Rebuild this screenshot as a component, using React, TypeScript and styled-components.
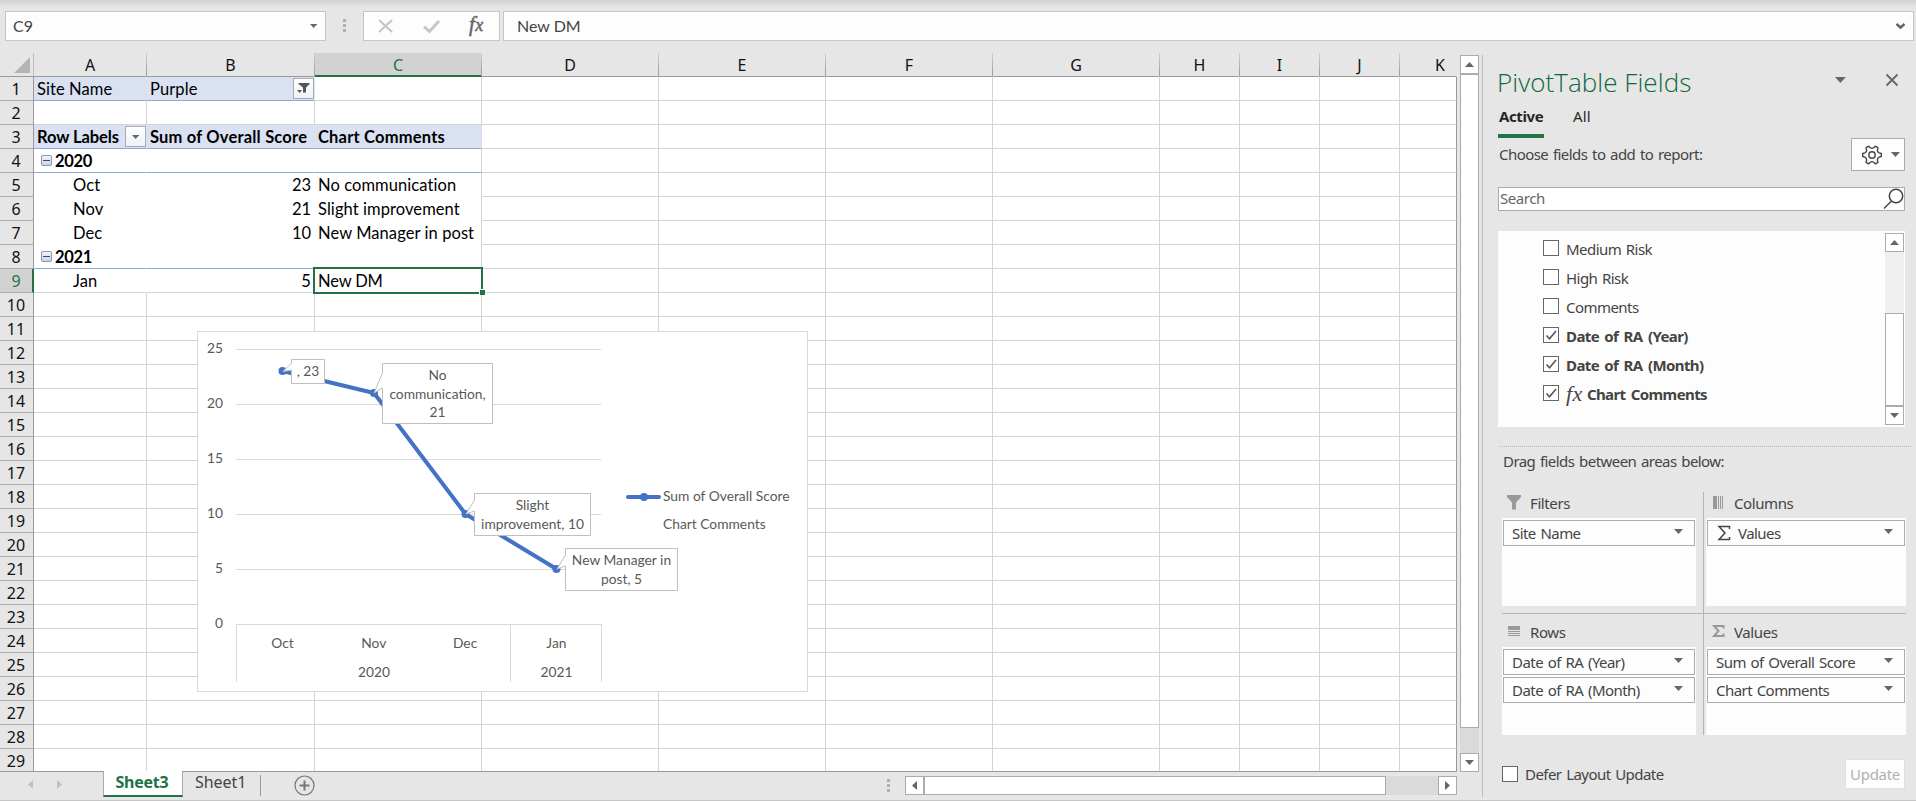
import React from "react";
import styled, { createGlobalStyle, css } from "styled-components";

const GREEN = "#217346";
const UI = `"Noto Sans", "Open Sans", sans-serif`;
const BODY = `Lato, "Open Sans", sans-serif`;

const GlobalStyle = createGlobalStyle`
  *, *::before, *::after { box-sizing: border-box; }
  body { margin: 0; background: #e6e6e6; font-family: ${UI}; overflow: hidden; }
`;

/* ---------- window frame ---------- */
const Window = styled.div`
  width: 1916px;
  height: 801px;
  background: #e6e6e6;
  display: flex;
  flex-direction: column;
  border-bottom: 1px solid #c6c6c6;
  overflow: hidden;
`;
const FormulaRow = styled.div`
  height: 53px;
  flex: none;
  display: flex;
  align-items: flex-start;
  padding: 11px 2px 0 5px;
  background: linear-gradient(#d2d2d2, #e6e6e6 8px);
`;
const FormulaBox = styled.div<{ $w?: number; $ml?: number; $pl?: number }>`
  height: 30px;
  width: ${(p) => (p.$w ? `${p.$w}px` : "auto")};
  flex: ${(p) => (p.$w ? "none" : "1")};
  margin-left: ${(p) => p.$ml ?? 0}px;
  padding: 0 8px 0 ${(p) => p.$pl ?? 7}px;
  border: 1px solid #c6c6c6;
  background: #fdfdfd;
  display: flex;
  align-items: center;
  justify-content: space-between;
  font: 16px/28px ${BODY};
  color: #444;
`;
const Tools = styled(FormulaBox)`
  justify-content: flex-start;
  padding: 0;
`;
const Dots = styled.div<{ $ml?: number; $mt?: number }>`
  display: flex;
  flex-direction: column;
  gap: 2px;
  width: 3px;
  margin: ${(p) => p.$mt ?? 0}px 0 0 ${(p) => p.$ml ?? 0}px;
  i { width: 3px; height: 3px; background: #b0b0b0; }
`;
const Main = styled.div`
  flex: 1;
  display: flex;
  min-height: 0;
`;
const Workbook = styled.div`
  width: 1482px;
  flex: none;
  display: flex;
  flex-direction: column;
`;
const SheetArea = styled.div`
  display: flex;
  height: 719px;
`;

/* ---------- grid ---------- */
const Sheet = styled.div`
  position: relative;
  width: 1457px;
  height: 719px;
  overflow: hidden;
  border-bottom: 1px solid #999;
`;
const Row = styled.div`
  display: flex;
  height: 24px;
`;
const Corner = styled.div`
  width: 34px;
  height: 24px;
  padding: 4px 3px 0 0;
  display: flex;
  justify-content: flex-end;
  border-right: 1px solid #bdbdbd;
  border-bottom: 1px solid #999;
`;
const ColHead = styled.div<{ $w: number; $on?: boolean; $last?: boolean }>`
  width: ${(p) => p.$w}px;
  height: 24px;
  flex: none;
  padding: 1px 0 0 ${(p) => (p.$last ? 24 : 0)}px;
  font: 16px/23px ${UI};
  text-align: center;
  color: ${(p) => (p.$on ? GREEN : "#111")};
  background: ${(p) => (p.$on ? "#d2d2d2" : "transparent")};
  border-bottom: ${(p) => (p.$on ? `2px solid ${GREEN}` : "1px solid #999")};
  border-right: 1px solid transparent;
  position: relative;
  ${(p) =>
    !p.$last &&
    css`
      &::after {
        content: "";
        position: absolute;
        right: -1px;
        top: 0;
        width: 1px;
        height: 100%;
        background: linear-gradient(#cfcfcf, #999);
      }
    `}
`;
const RowHead = styled.div<{ $on?: boolean }>`
  width: 34px;
  height: 24px;
  flex: none;
  font: 16px/23px ${UI};
  text-align: center;
  padding-top: 1px;
  padding-right: ${(p) => (p.$on ? 0 : 1)}px;
  color: ${(p) => (p.$on ? GREEN : "#111")};
  background: ${(p) => (p.$on ? "#d2d2d2" : "transparent")};
  border-right: ${(p) => (p.$on ? `2px solid ${GREEN}` : "1px solid #999")};
  border-bottom: 1px solid #ababab;
`;
const Cell = styled.div<{
  $w: number;
  $fill?: boolean;
  $blue?: boolean;
  $open?: boolean;
  $noRight?: boolean;
  $bold?: boolean;
  $num?: boolean;
  $indent?: number;
  $last?: boolean;
}>`
  width: ${(p) => p.$w}px;
  height: 24px;
  flex: none;
  display: flex;
  align-items: center;
  justify-content: ${(p) => (p.$num ? "flex-end" : "flex-start")};
  padding-left: ${(p) => p.$indent ?? 3}px;
  padding-right: ${(p) => (p.$num ? 3 : 0)}px;
  white-space: nowrap;
  font: ${(p) => (p.$bold ? 700 : 400)} 16.5px/23px ${BODY};
  color: #000;
  background: ${(p) => (p.$fill ? "#d9e1f2" : "#fff")};
  border-right: 1px solid
    ${(p) => (p.$last ? "#999" : p.$fill ? "#d9e1f2" : p.$noRight ? "#fff" : "#d4d4d4")};
  border-bottom: 1px solid
    ${(p) => (p.$blue ? "#8ea9db" : p.$open ? "#fff" : "#d4d4d4")};
`;
const CellText = styled.span<{ $ls: number }>`
  padding-top: 2px;
  letter-spacing: ${(p) => p.$ls}px;
`;
const DropButton = styled.span`
  width: 21px;
  height: 21px;
  flex: none;
  margin-left: auto;
  background: linear-gradient(#fff, #eef1f6);
  border: 1px solid #a6adb8;
  display: flex;
  align-items: center;
  justify-content: center;
`;
const Collapse = styled.span`
  width: 11px;
  height: 11px;
  flex: none;
  margin-right: 3px;
  border: 1px solid #8497b8;
  border-radius: 2px;
  background: linear-gradient(#f4f6f9, #ccd3df);
  display: flex;
  align-items: center;
  justify-content: center;
  &::before { content: ""; width: 7px; height: 1px; background: #344c7b; }
`;
const Selection = styled.div`
  position: absolute;
  left: 313px;
  top: 214px;
  width: 170px;
  height: 27px;
  border: 2px solid ${GREEN};
  &::after {
    content: "";
    position: absolute;
    right: -4px;
    bottom: -3px;
    width: 6px;
    height: 6px;
    background: ${GREEN};
    border: solid #fff;
    border-width: 1px 0 0 1px;
  }
`;
const ChartFrame = styled.div`
  position: absolute;
  left: 197px;
  top: 278px;
  width: 611px;
  height: 361px;
  background: #fff;
  border: 1px solid #d9d9d9;
  svg { display: block; }
`;

/* ---------- scroll bars ---------- */
const VScroll = styled.div`
  width: 19px;
  margin: 2px 0 0 3px;
  display: flex;
  flex-direction: column;
  background: #dadada;
`;
const HScroll = styled.div`
  display: flex;
  width: 552px;
  height: 19px;
  background: #dadada;
`;
const ScrollButton = styled.div`
  width: 19px;
  height: 19px;
  flex: none;
  background: #fff;
  border: 1px solid #ababab;
  display: flex;
  align-items: center;
  justify-content: center;
`;
const BottomButton = styled(ScrollButton)`
  margin-top: auto;
`;
const EndButton = styled(ScrollButton)`
  margin-left: auto;
`;
const Thumb = styled.div<{ $len: number; $h?: boolean }>`
  flex: none;
  background: #fff;
  border: 1px solid #ababab;
  ${(p) => (p.$h ? css`width: ${p.$len}px; height: 19px;` : css`height: ${p.$len}px; width: 19px;`)}
`;

/* ---------- sheet tabs ---------- */
const TabBar = styled.div`
  flex: 1;
  display: flex;
  align-items: flex-start;
  margin-top: -1px;
  position: relative;
`;
const NavArrows = styled.div`
  width: 103px;
  padding: 9px 0 0 28px;
  display: flex;
  gap: 24px;
`;
const ActiveTab = styled.div`
  width: 80px;
  height: 26px;
  padding-right: 2px;
  background: #fff;
  border: solid #ababab;
  border-width: 0 1px;
  border-bottom: 2px solid ${GREEN};
  color: ${GREEN};
  font: 700 16px/22px ${UI};
  letter-spacing: -0.25px;
  text-align: center;
`;
const Tab = styled.div`
  width: 78px;
  height: 21px;
  margin-top: 4px;
  padding-left: 12px;
  border-right: 1px solid #999;
  color: #444;
  font: 16px/14px ${UI};
  letter-spacing: -0.05px;
`;
const AddSheet = styled.div`
  margin: 4px 0 0 33px;
  width: 21px;
  height: 21px;
`;
const BottomScroll = styled.div`
  margin: 5px 25px 0 auto;
  display: flex;
  gap: 15px;
`;

/* ---------- fields pane ---------- */
const Pane = styled.aside`
  width: 434px;
  margin-top: 2px;
  margin-bottom: 3px;
  border-left: 1px solid #bdbdbd;
  padding: 0 11px 0 15px;
  color: #444;
  font: 15px/20px ${UI};
  letter-spacing: -0.55px;
  word-spacing: 1.3px;
  display: flex;
  flex-direction: column;
`;
const PaneTitle = styled.div`
  height: 46px;
  display: flex;
  align-items: center;
  justify-content: space-between;
  h1 {
    margin: 8px 0 0 -1px;
    font: 300 26px/40px "Open Sans", ${UI};
    letter-spacing: 0.05px;
    word-spacing: 0;
    color: #0f6a3a;
  }
`;
const TitleIcons = styled.div`
  display: flex;
  align-items: center;
  gap: 39px;
  margin: 4px 6px 0 0;
`;
const Tabs = styled.div`
  display: flex;
  height: 37px;
`;
const PaneTab = styled.div<{ $on?: boolean }>`
  width: ${(p) => (p.$on ? "46px" : "auto")};
  margin-right: 28px;
  padding: 5px 0 0 1px;
  color: #262626;
  font-weight: ${(p) => (p.$on ? 700 : 400)};
  letter-spacing: ${(p) => (p.$on ? -0.4 : 0.1)}px;
  border-bottom: ${(p) => (p.$on ? `4px solid ${GREEN}` : "none")};
`;
const Choose = styled.div`
  display: flex;
  justify-content: space-between;
  height: 33px;
  padding-left: 1px;
  line-height: 33px;
`;
const GearButton = styled.div`
  width: 54px;
  height: 33px;
  border: 1px solid #ababab;
  background: #fdfdfd;
  display: flex;
  align-items: center;
  padding-left: 10px;
  gap: 9px;
`;
const Search = styled.div`
  height: 24px;
  margin-top: 16px;
  padding-left: 1px;
  border: 1px solid #ababab;
  background: #fff;
  color: #666;
  display: flex;
  justify-content: space-between;
  line-height: 21px;
  letter-spacing: -0.45px;
`;
const FieldList = styled.div`
  height: 196px;
  margin-top: 20px;
  background: #fdfdfd;
  display: flex;
  justify-content: space-between;
`;
const ListScroll = styled.div`
  width: 19px;
  margin: 2px 1px 2px 0;
  display: flex;
  flex-direction: column;
  background: #f0f0f0;
`;
const ListTrack = styled.div`
  flex: 1;
  display: flex;
  align-items: flex-end;
`;
const Fields = styled.div`
  padding: 3px 0 0 45px;
`;
const Field = styled.div<{ $on?: boolean }>`
  height: 29px;
  display: flex;
  align-items: center;
  font-weight: ${(p) => (p.$on ? 700 : 400)};
  letter-spacing: ${(p) => (p.$on ? -0.6 : -0.55)}px;
  word-spacing: ${(p) => (p.$on ? 2 : 1.3)}px;
  white-space: pre;
  > span { padding-top: 1px; }
`;
const Check = styled.i`
  width: 16px;
  height: 16px;
  flex: none;
  margin-right: 7px;
  margin-top: -1px;
  border: 1px solid #666;
  background: #fff;
  svg { display: block; }
`;
const Fx = styled.em`
  font: italic 22px/22px "Liberation Serif", serif;
  letter-spacing: 0.5px;
  margin-right: 4px;
  color: #444;
`;
const Drag = styled.div`
  margin: 19px -6px 0 2px;
  border-top: 1px dotted #b5b5b5;
  padding: 4px 0 0 3px;
  height: 46px;
`;
const Areas = styled.div`
  display: grid;
  grid-template-columns: 201px 203px;
  grid-template-rows: 121px 122px;
  margin-left: 4px;
`;
const Area = styled.section<{ $right?: boolean; $low?: boolean }>`
  border-left: ${(p) => (p.$right ? "1px solid #b5b5b5" : "none")};
  border-top: ${(p) => (p.$low ? "1px solid #b5b5b5" : "none")};
  padding-left: ${(p) => (p.$right ? 2 : 0)}px;
  padding-top: ${(p) => (p.$low ? 7 : 0)}px;
  padding-right: ${(p) => (p.$right ? 0 : 7)}px;
`;
const AreaHead = styled.header<{ $right?: boolean }>`
  height: 26px;
  display: flex;
  align-items: center;
  padding: 0 0 4px ${(p) => (p.$right ? 6 : 5)}px;
  letter-spacing: -0.4px;
  svg { width: ${(p) => (p.$right ? 22 : 23)}px; flex: none; margin-bottom: 1px; }
`;
const DropZone = styled.div`
  height: 88px;
  background: #fdfdfd;
  padding: 2px 1px;
  display: flex;
  flex-direction: column;
  gap: 2px;
`;
const Chip = styled.div`
  height: 26px;
  border: 1px solid #ababab;
  background: #fdfdfd;
  display: flex;
  align-items: center;
  padding: 0 11px 1px 8px;
  svg:last-child { margin-left: auto; margin-top: -2px; }
`;
const SigmaLabel = styled.span`
  margin-left: 6px;
`;
const Footer = styled.div`
  display: flex;
  margin: 24px 0 0 4px;
  height: 30px;
  align-items: center;
  letter-spacing: -0.55px;
`;
const Update = styled.button`
  margin-left: auto;
  width: 60px;
  height: 30px;
  padding: 0;
  border: 1px solid #e0e0e0;
  background: #fdfdfd;
  color: #b1b1b1;
  font: 15px ${UI};
  letter-spacing: -0.3px;
`;

/* ---------- small drawings ---------- */
type Dir = "up" | "down" | "left" | "right";
const arrows: Record<Dir, string> = {
  up: "M0 5 L4.5 0 L9 5Z",
  down: "M0 0 L9 0 L4.5 5Z",
  left: "M5 0 L0 4.5 L5 9Z",
  right: "M0 0 L5 4.5 L0 9Z",
};
const Arrow = ({ dir = "down", size = 1, color = "#666" }: { dir?: Dir; size?: number; color?: string }) => {
  const flat = dir === "up" || dir === "down";
  const [w, h] = flat ? [9, 5] : [5, 9];
  return (
    <svg width={w * size} height={h * size} viewBox={`0 0 ${w} ${h}`}>
      <path d={arrows[dir]} fill={color} />
    </svg>
  );
};
const Sigma = () => (
  <svg width="16" height="16" viewBox="0 0 16 16" fill="none" stroke="#444">
    <path d="M13.500 4V1.5H3L9 8L3 14.500H13.500V12" strokeWidth="1.5" />
  </svg>
);
const CheckBox = ({ on }: { on?: boolean }) => (
  <Check>
    {on && (
      <svg width="14" height="14" viewBox="0 0 14 14" fill="none" stroke="#555" strokeWidth="1.6">
        <path d="M2.500 7.500L5.500 10.700L12 3" />
      </svg>
    )}
  </Check>
);
const ColumnsIcon = () => (
  <svg height="13" viewBox="0 0 22 13" fill="#999">
    <path d="M1 0h4v13H1zM6 0h1v13H6zM8 0h1v13H8zM10 0h1v13h-1z" />
  </svg>
);
const RowsIcon = () => (
  <svg height="11" viewBox="0 0 23 11" fill="#999">
    <path d="M1 0h12v4H1zM1 5h12v1H1zM1 7h12v1H1zM1 9h12v1H1z" />
  </svg>
);
const FilterIcon = () => (
  <svg height="15" viewBox="0 0 23 15" fill="#999">
    <path d="M0 0h14v2L9 7.500V14.500H5V7.500L0 2z" />
  </svg>
);
const polar = (r: number, deg: number) => {
  const a = (deg * Math.PI) / 180;
  return `${(10 + r * Math.cos(a)).toFixed(2)} ${(10 + r * Math.sin(a)).toFixed(2)}`;
};
const gearPath =
  [0, 60, 120, 180, 240, 300]
    .map((t, i) => `${i ? "L" : "M"}${polar(9.4, t - 9)}L${polar(9.4, t + 9)}L${polar(7.4, t + 17)}Q${polar(6, t + 30)} ${polar(7.4, t + 43)}`)
    .join("") + "Z";
const GearIcon = () => (
  <svg width="20" height="20" viewBox="0 0 20 20" fill="none" stroke="#444" strokeWidth="1.400" strokeLinejoin="round">
    <path d={gearPath} />
    <circle cx="10" cy="10" r="3.200" />
  </svg>
);

/* ---------- data ---------- */
const columns: [string, number][] = [
  ["A", 113], ["B", 168], ["C", 167], ["D", 177], ["E", 167], ["F", 167],
  ["G", 167], ["H", 80], ["I", 80], ["J", 80], ["K", 57],
];
const T = (text: string, ls = 0.08) => <CellText $ls={ls}>{text}</CellText>;

type CellSpec = {
  node?: React.ReactNode;
  fill?: boolean;
  blue?: boolean;
  open?: boolean;
  noRight?: boolean;
  bold?: boolean;
  num?: boolean;
  indent?: number;
};
const filterButton = (
  <DropButton>
    <svg width="13" height="11" viewBox="0 0 13 11" fill="#555">
      <path d="M1.500 0H12.500V1L9 4.500V9.500H6V4.500L1.500 1zM0 7h5L2.500 10z" />
    </svg>
  </DropButton>
);
const month = (name: string, score: string, comment: string): CellSpec[] => [
  { node: T(name), open: true, noRight: true, indent: 39 },
  { node: T(score, -0.1), open: true, noRight: true, num: true },
  { node: T(comment), open: true },
];
const year = (label: string): CellSpec[] => [
  { node: <><Collapse />{T(label, -0.35)}</>, bold: true, noRight: true, blue: true, indent: 7 },
  { noRight: true, blue: true },
  { blue: true },
];
const cells: Record<number, CellSpec[]> = {
  1: [
    { node: T("Site Name"), fill: true, blue: true },
    { node: <>{T("Purple", 0.1)}{filterButton}</>, fill: true, blue: true },
  ],
  3: [
    { node: <>{T("Row Labels", -0.1)}<DropButton><Arrow size={0.8} /></DropButton></>, fill: true, blue: true, bold: true },
    { node: T("Sum of Overall Score", 0.2), fill: true, blue: true, bold: true },
    { node: T("Chart Comments", 0.2), fill: true, blue: true, bold: true },
  ],
  4: year("2020"),
  5: month("Oct", "23", "No communication"),
  6: month("Nov", "21", "Slight improvement"),
  7: month("Dec", "10", "New Manager in post"),
  8: year("2021"),
  9: [
    { node: T("Jan"), noRight: true, indent: 39 },
    { node: T("5"), num: true },
    { node: T("New DM", -0.15) },
  ],
};

/* ---------- chart ---------- */
const callouts = [
  { x: 93, y: 27, w: 33, h: 24, a: 4, b: 11, px: 85, py: 39.5, lines: [", 23"] },
  { x: 184, y: 31, w: 110, h: 60, a: 10, b: 25, px: 176, py: 61, lines: ["No", "communication,", "21"] },
  { x: 276, y: 161, w: 116, h: 42, a: 7, b: 18, px: 268, py: 182, lines: ["Slight", "improvement, 10"] },
  { x: 367, y: 216, w: 112, h: 42, a: 7, b: 18, px: 359, py: 237, lines: ["New Manager in", "post, 5"] },
];
const ChartText = styled.text<{ $anchor?: string }>`
  font: 13.8px ${BODY};
  fill: #595959;
  text-anchor: ${(p) => p.$anchor ?? "middle"};
`;
const points: [number, number][] = [[84.5, 39], [176, 61], [267.5, 182], [358.5, 237]];
const Chart = () => (
  <svg width="609" height="359" viewBox="0 0 609 359">
    <g stroke="#d9d9d9">
      {[0, 1, 2, 3, 4, 5].map((i) => (
        <line key={i} x1="38" x2="403" y1={17.5 + i * 55} y2={17.5 + i * 55} />
      ))}
      {[38.5, 312.5, 403.5].map((x) => (
        <line key={x} x1={x} x2={x} y1="292" y2="350" />
      ))}
    </g>
    {[25, 20, 15, 10, 5, 0].map((v, i) => (
      <ChartText key={v} $anchor="end" x="25" y={21 + i * 55}>{v}</ChartText>
    ))}
    {["Oct", "Nov", "Dec", "Jan"].map((m, i) => (
      <ChartText key={m} x={84.5 + i * 91.3} y="316">{m}</ChartText>
    ))}
    <ChartText x="176" y="345">2020</ChartText>
    <ChartText x="358.500" y="345">2021</ChartText>
    <polyline points={points.join(" ")} fill="none" stroke="#4472c4" strokeWidth="4" strokeLinejoin="round" />
    {points.map(([x, y]) => (
      <circle key={x} cx={x} cy={y} r="4" fill="#4472c4" />
    ))}
    {callouts.map((c) => (
      <g key={c.x}>
        <path
          d={`M${c.x + 0.5} ${c.y + 0.5}h${c.w}v${c.h}h${-c.w}V${c.y + c.b}L${c.px} ${c.py}L${c.x + 0.5} ${c.y + c.a}Z`}
          fill="#fff"
          stroke="#bfbfbf"
        />
        {c.lines.map((l, i) => (
          <ChartText key={l} x={c.x + 0.5 + c.w / 2} y={c.y + 17 + i * 18.7}>{l}</ChartText>
        ))}
      </g>
    ))}
    <line x1="430" x2="461" y1="165" y2="165" stroke="#4472c4" strokeWidth="4" strokeLinecap="round" />
    <circle cx="446" cy="165" r="4" fill="#4472c4" />
    <ChartText $anchor="start" x="465" y="169">Sum of Overall Score</ChartText>
    <ChartText $anchor="start" x="465" y="197">Chart Comments</ChartText>
  </svg>
);

/* ---------- page ---------- */
export default function App() {
  return (
    <Window>
      <GlobalStyle />
      <FormulaRow>
        <FormulaBox $w={321}>
          C9
          <Arrow size={0.8} />
        </FormulaBox>
        <Dots $ml={17} $mt={8}><i /><i /><i /></Dots>
        <Tools $w={137} $ml={17}>
          <svg width="135" height="28" viewBox="0 0 135 28" fill="none">
            <path d="M15 8L28 20M28 8L15 20" stroke="#c6c6c6" strokeWidth="2.2" />
            <path d="M60 14.500L65.500 19.500L75 9" stroke="#c6c6c6" strokeWidth="3" />
            <text x="105" y="19" fill="#666" stroke="#666" strokeWidth="0.5" fontFamily="Liberation Serif, serif" fontStyle="italic" fontSize="21">
              f<tspan dx="0.500" fontSize="18">x</tspan>
            </text>
          </svg>
        </Tools>
        <FormulaBox $ml={3} $pl={13}>
          New DM
          <svg width="9" height="7" viewBox="0 0 9 7" fill="none" stroke="#666" strokeWidth="2.500">
            <path d="M0.500 1L4.500 4.500L8.500 1" />
          </svg>
        </FormulaBox>
      </FormulaRow>
      <Main>
        <Workbook>
          <SheetArea>
            <Sheet>
              <Row>
                <Corner>
                  <svg width="16" height="16"><path d="M16 0V16H0Z" fill="#b4b4b4" /></svg>
                </Corner>
                {columns.map(([name, w]) => (
                  <ColHead key={name} $w={w} $on={name === "C"} $last={name === "K"}>{name}</ColHead>
                ))}
              </Row>
              {Array.from({ length: 29 }, (_, i) => i + 1).map((n) => (
                <Row key={n}>
                  <RowHead $on={n === 9}>{n}</RowHead>
                  {columns.map(([name, w], c) => {
                    const s = cells[n]?.[c] ?? {};
                    return (
                      <Cell
                        key={name} $w={w} $fill={s.fill} $blue={s.blue} $open={s.open} $noRight={s.noRight}
                        $bold={s.bold} $num={s.num} $indent={s.indent} $last={name === "K"}
                      >
                        {s.node}
                      </Cell>
                    );
                  })}
                </Row>
              ))}
              <Selection />
              <ChartFrame><Chart /></ChartFrame>
            </Sheet>
            <VScroll>
              <ScrollButton><Arrow dir="up" /></ScrollButton>
              <Thumb $len={654} />
              <BottomButton><Arrow /></BottomButton>
            </VScroll>
          </SheetArea>
          <TabBar>
            <NavArrows>
              <Arrow dir="left" color="#c0c0c0" />
              <Arrow dir="right" color="#c0c0c0" />
            </NavArrows>
            <ActiveTab>Sheet3</ActiveTab>
            <Tab>Sheet1</Tab>
            <AddSheet>
              <svg width="21" height="21" viewBox="0 0 21 21" fill="none" stroke="#777">
                <circle cx="10.500" cy="10.500" r="9.500" strokeWidth="1.2" />
                <path d="M10.500 5.500v10M5.500 10.500h10" strokeWidth="2" />
              </svg>
            </AddSheet>
            <BottomScroll>
              <Dots $mt={3}><i /><i /><i /></Dots>
              <HScroll>
                <ScrollButton><Arrow dir="left" /></ScrollButton>
                <Thumb $h $len={462} />
                <EndButton><Arrow dir="right" /></EndButton>
              </HScroll>
            </BottomScroll>
          </TabBar>
        </Workbook>
        <Pane>
          <PaneTitle>
            <h1>PivotTable Fields</h1>
            <TitleIcons>
              <Arrow size={1.2} />
              <svg width="14" height="14" viewBox="0 0 14 14" stroke="#666" strokeWidth="1.800">
                <path d="M1.500 1.500L12.500 12.500M12.500 1.500L1.500 12.500" />
              </svg>
            </TitleIcons>
          </PaneTitle>
          <Tabs>
            <PaneTab $on>Active</PaneTab>
            <PaneTab>All</PaneTab>
          </Tabs>
          <Choose>
            Choose fields to add to report:
            <GearButton>
              <GearIcon />
              <Arrow />
            </GearButton>
          </Choose>
          <Search>
            Search
            <svg width="21" height="22" viewBox="0 0 21 22" fill="none" stroke="#444" strokeWidth="1.500">
              <circle cx="13" cy="8" r="6.700" />
              <path d="M8.500 13L1 20.500" />
            </svg>
          </Search>
          <FieldList>
            <Fields>
              <Field><CheckBox /><span>Medium Risk</span></Field>
              <Field><CheckBox /><span>High Risk</span></Field>
              <Field><CheckBox /><span>Comments</span></Field>
              <Field $on><CheckBox on /><span>Date of RA (Year)</span></Field>
              <Field $on><CheckBox on /><span>Date of RA (Month)</span></Field>
              <Field $on><CheckBox on /><Fx>fx</Fx><span>Chart Comments</span></Field>
            </Fields>
            <ListScroll>
              <ScrollButton><Arrow dir="up" /></ScrollButton>
              <ListTrack><Thumb $len={93} /></ListTrack>
              <ScrollButton><Arrow /></ScrollButton>
            </ListScroll>
          </FieldList>
          <Drag>Drag fields between areas below:</Drag>
          <Areas>
            <Area>
              <AreaHead><FilterIcon />Filters</AreaHead>
              <DropZone><Chip>Site Name<Arrow /></Chip></DropZone>
            </Area>
            <Area $right>
              <AreaHead $right><ColumnsIcon />Columns</AreaHead>
              <DropZone><Chip><Sigma /><SigmaLabel>Values</SigmaLabel><Arrow /></Chip></DropZone>
            </Area>
            <Area $low>
              <AreaHead><RowsIcon />Rows</AreaHead>
              <DropZone>
                <Chip>Date of RA (Year)<Arrow /></Chip>
                <Chip>Date of RA (Month)<Arrow /></Chip>
              </DropZone>
            </Area>
            <Area $low $right>
              <AreaHead $right>
                <svg height="13" viewBox="0 0 22 13" fill="none" stroke="#999" strokeWidth="2">
                  <path d="M11.500 3.500V1H2L6.500 6L2 11H11.500V8.500" />
                </svg>
                Values
              </AreaHead>
              <DropZone>
                <Chip>Sum of Overall Score<Arrow /></Chip>
                <Chip>Chart Comments<Arrow /></Chip>
              </DropZone>
            </Area>
          </Areas>
          <Footer>
            <Check />
            Defer Layout Update
            <Update>Update</Update>
          </Footer>
        </Pane>
      </Main>
    </Window>
  );
}
